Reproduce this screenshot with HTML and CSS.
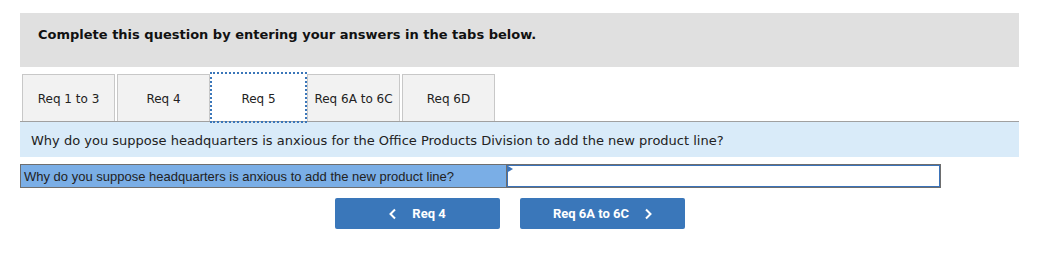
FILE: index.html
```html
<!DOCTYPE html>
<html>
<head>
<meta charset="utf-8">
<link rel="stylesheet" href="styles.css">
</head>
<body>
<div class="page">
  <div class="instructions">Complete this question by entering your answers in the tabs below.</div>
  <div class="tabs">
    <div class="tab">Req 1 to 3</div>
    <div class="tab">Req 4</div>
    <div class="tab active">Req 5</div>
    <div class="tab">Req 6A to 6C</div>
    <div class="tab">Req 6D</div>
  </div>
  <div class="question">Why do you suppose headquarters is anxious for the Office Products Division to add the new product line?</div>
  <div class="answer">
    <div class="label">Why do you suppose headquarters is anxious to add the new product line?</div>
    <div class="input"><span class="marker"></span></div>
  </div>
  <div class="nav">
    <button class="btn"><svg class="chev" width="8" height="12" viewBox="0 0 8 12"><polyline points="6,1.5 1.5,6 6,10.5" fill="none" stroke="#fff" stroke-width="2"/></svg><span>Req 4</span></button>
    <button class="btn"><span>Req 6A to 6C</span><svg class="chev" width="8" height="12" viewBox="0 0 8 12"><polyline points="2,1.5 6.5,6 2,10.5" fill="none" stroke="#fff" stroke-width="2"/></svg></button>
  </div>
</div>
</body>
</html>
```

FILE: styles.css
```css
html, body {
  margin: 0;
  padding: 0;
  background: #fff;
}
.page {
  padding: 13px 20px 0 20px;
  font-family: "DejaVu Sans", Verdana, sans-serif;
}
.instructions {
  box-sizing: border-box;
  background: #e0e0e0;
  height: 54px;
  padding: 14px 0 0 18px;
  font-weight: bold;
  font-size: 13px;
  line-height: 16px;
  color: #111;
}
.tabs {
  margin-top: 7px;
  display: flex;
  gap: 2px;
  padding-left: 2px;
  border-bottom: 1px solid #a0a0a0;
}
.tab {
  box-sizing: border-box;
  width: 93px;
  height: 47px;
  border: 1px solid #c8c8c8;
  border-bottom: none;
  background: #f2f2f2;
  display: flex;
  align-items: center;
  justify-content: center;
  padding-top: 2px;
  font-size: 12px;
  color: #222;
}
.tab.active {
  background: #fff;
  border-color: #fff;
  outline: 2px dotted #3a76b9;
  outline-offset: 0;
}
.question {
  background: #d9ebf9;
  height: 35px;
  display: flex;
  align-items: center;
  padding-left: 11px;
  padding-top: 1px;
  box-sizing: border-box;
  font-size: 13px;
  color: #222;
}
.answer {
  margin-top: 7px;
  width: 921px;
  height: 24px;
  box-sizing: border-box;
  border: 1px solid #6e6e6e;
  display: flex;
}
.label {
  width: 486px;
  background: #7aaee6;
  border-right: 1px solid #6e6e6e;
  font-family: "Liberation Sans", Arial, sans-serif;
  font-size: 13px;
  color: #222;
  display: flex;
  align-items: center;
  padding-left: 3px;
  box-sizing: border-box;
}
.input {
  flex: 1;
  position: relative;
  border: 1.5px solid #3b73b9;
  background: #fff;
}
.marker {
  position: absolute;
  left: 0;
  top: 0;
  width: 0;
  height: 0;
  border-top: 3px solid transparent;
  border-bottom: 3px solid transparent;
  border-left: 5px solid #3b73b9;
}
.nav {
  margin-top: 10px;
  padding-left: 315px;
  display: flex;
  gap: 20px;
}
.btn {
  width: 165px;
  height: 31px;
  background: #3a77ba;
  border: none;
  border-radius: 2px;
  color: #fff;
  font-family: Roboto, "Liberation Sans", sans-serif;
  font-weight: bold;
  font-size: 13px;
  display: flex;
  align-items: center;
  justify-content: center;
  gap: 15px;
  padding: 0;
}
.chev {
  display: block;
}
```
